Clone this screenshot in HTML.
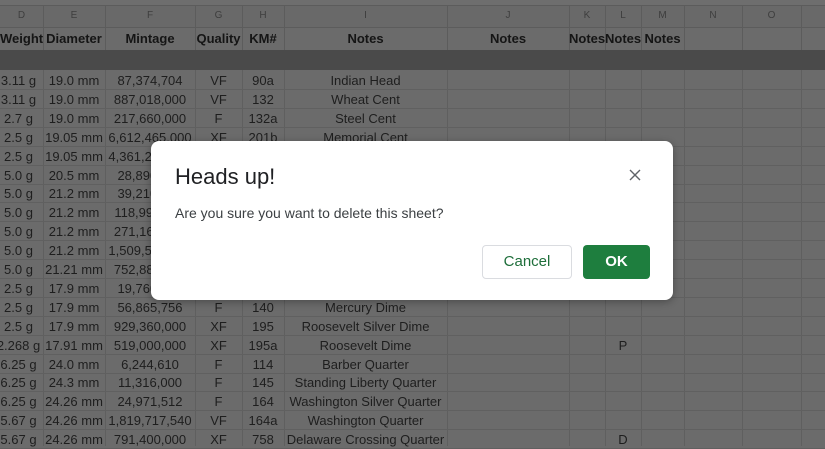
<!DOCTYPE html>
<html><head><meta charset="utf-8"><style>
*{margin:0;padding:0;box-sizing:border-box}
body{width:825px;height:446px;overflow:hidden;background:#6b6b6b;font-family:"Liberation Sans",sans-serif;position:relative}
.g{position:absolute;left:0;top:0}
.c{position:absolute;text-align:center;white-space:nowrap;overflow:hidden;color:#1e1e1e;font-size:13px}
.dlg{position:absolute;left:151px;top:141px;width:522px;height:159px;background:#fff;border-radius:8px;box-shadow:0 2px 8px rgba(0,0,0,.3)}
</style></head><body>
<div id="grid"></div>
<div class="dlg">
<div style="position:absolute;left:24px;top:23px;font-size:22px;color:#202124">Heads up!</div>
<svg style="position:absolute;left:478px;top:28px" width="12" height="12" viewBox="0 0 12 12"><path d="M1 1L11 11M11 1L1 11" stroke="#5f6368" stroke-width="1.4"/></svg>
<div style="position:absolute;left:24px;top:64px;font-size:14px;color:#3c4043">Are you sure you want to delete this sheet?</div>
<div style="position:absolute;left:331px;top:104px;width:90px;height:34px;border:1px solid #dadce0;border-radius:4px;color:#1e6e3a;font-size:15px;text-align:center;line-height:32px">Cancel</div>
<div style="position:absolute;left:432px;top:104px;width:67px;height:34px;background:#1e7e3e;border-radius:4px;color:#fff;font-size:15px;font-weight:bold;text-align:center;line-height:34px">OK</div>
</div>
<script>
var cols=[0,43,105,195,242,284,447,569,605,641,684,742,801,825];
var letters=["D","E","F","G","H","I","J","K","L","M","N","O",""];
var heads=["Weight","Diameter","Mintage","Quality","KM#","Notes","Notes","Notes","Notes","Notes","","",""];
var rows=[
["3.11 g","19.0 mm","87,374,704","VF","90a","Indian Head"],
["3.11 g","19.0 mm","887,018,000","VF","132","Wheat Cent"],
["2.7 g","19.0 mm","217,660,000","F","132a","Steel Cent"],
["2.5 g","19.05 mm","6,612,465,000","XF","201b","Memorial Cent"],
["2.5 g","19.05 mm","4,361,220,000","","",""],
["5.0 g","20.5 mm","28,890,000","","",""],
["5.0 g","21.2 mm","39,210,000","","",""],
["5.0 g","21.2 mm","118,990,000","","",""],
["5.0 g","21.2 mm","271,160,000","","",""],
["5.0 g","21.2 mm","1,509,500,000","","",""],
["5.0 g","21.21 mm","752,880,000","","",""],
["2.5 g","17.9 mm","19,760,000","","",""],
["2.5 g","17.9 mm","56,865,756","F","140","Mercury Dime"],
["2.5 g","17.9 mm","929,360,000","XF","195","Roosevelt Silver Dime"],
["2.268 g","17.91 mm","519,000,000","XF","195a","Roosevelt Dime","","","P"],
["6.25 g","24.0 mm","6,244,610","F","114","Barber Quarter"],
["6.25 g","24.3 mm","11,316,000","F","145","Standing Liberty Quarter"],
["6.25 g","24.26 mm","24,971,512","F","164","Washington Silver Quarter"],
["5.67 g","24.26 mm","1,819,717,540","VF","164a","Washington Quarter"],
["5.67 g","24.26 mm","791,400,000","XF","758","Delaware Crossing Quarter","","","D"]];
var h='';
h+='<div style="position:absolute;left:0;top:0;width:825px;height:6px;background:#6e6e6e;border-bottom:1px solid #5c5c5c"></div>';
h+='<div style="position:absolute;left:0;top:6px;width:825px;height:22px;background:#696969;border-bottom:1px solid #5c5c5c"></div>';
h+='<div style="position:absolute;left:0;top:50px;width:825px;height:20px;background:#4a4a4a"></div>';
for(var i=1;i<cols.length-1;i++){h+='<div style="position:absolute;left:'+cols[i]+'px;top:6px;width:1px;height:44px;background:#5c5c5c"></div>';h+='<div style="position:absolute;left:'+cols[i]+'px;top:70px;width:1px;height:376px;background:#5f5f5f"></div>';}
for(var i=0;i<cols.length-1;i++){var w=cols[i+1]-cols[i];
h+='<div class="c" style="left:'+cols[i]+'px;top:10px;width:'+w+'px;font-size:10px;color:#3e3e3e">'+letters[i]+'</div>';
h+='<div class="c" style="left:'+cols[i]+'px;top:31px;width:'+w+'px;font-weight:bold;font-size:13px;color:#151515">'+heads[i]+'</div>';}
for(var r=0;r<rows.length;r++){var y=71+r*18.9;
h+='<div style="position:absolute;left:0;top:'+(y+18)+'px;width:825px;height:1px;background:#606060"></div>';
for(var i=0;i<rows[r].length;i++){if(!rows[r][i])continue;var w=cols[i+1]-cols[i];var l=cols[i];
if(i==0){l=-6;w=49;}
h+='<div class="c" style="left:'+l+'px;top:'+(y+2)+'px;width:'+w+'px">'+rows[r][i]+'</div>';}}
document.getElementById('grid').innerHTML=h;
</script>
</body></html>
